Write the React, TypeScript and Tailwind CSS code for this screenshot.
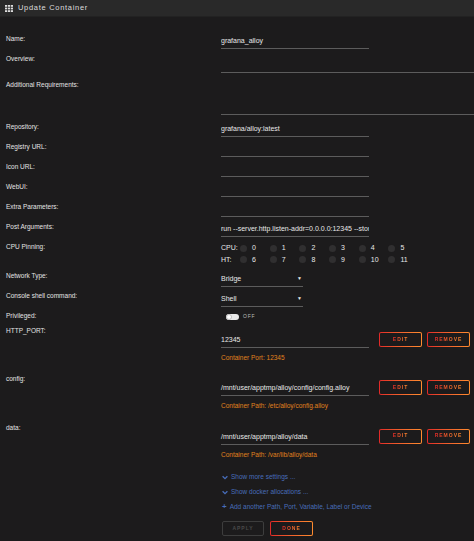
const font = { fontFamily: '"Liberation Sans", Arial, sans-serif' };

function Label({ children }: { children: React.ReactNode }) {
  return <div className="w-[215px] shrink-0 pt-[2px] text-[6.5px] leading-[8px] text-[#e4e4e4]">{children}</div>;
}

function Field({ value = '', wide = false, w = 'w-[148px]' }: { value?: string; wide?: boolean; w?: string }) {
  return (
    <div
      className={`${wide ? 'flex-1' : w} h-[16px] pt-[3px] pb-[3px] border-b border-[#5c5c5c] text-[7px] leading-[9px] text-[#e8e8e8] whitespace-nowrap overflow-hidden`}
    >
      {value}
    </div>
  );
}

function Row({ label, children, h = 'h-[20px]' }: { label: string; children?: React.ReactNode; h?: string }) {
  return (
    <div className={`flex ${h}`}>
      <Label>{label}</Label>
      <div className="flex-1 flex items-start">{children}</div>
    </div>
  );
}

function GradButton({ children, w = 'w-[43px]' }: { children: React.ReactNode; w?: string }) {
  return (
    <div className={`${w} h-[15px] p-[1px] rounded-[2px] bg-gradient-to-r from-[#e22828] to-[#ff8c2f]`}>
      <div className="w-full h-full rounded-[1px] bg-[#1c1b1c] flex items-center justify-center">
        <span className="text-[5px] font-bold tracking-[1px] bg-gradient-to-r from-[#e22828] to-[#ff8c2f] bg-clip-text text-transparent">
          {children}
        </span>
      </div>
    </div>
  );
}

function Select({ value }: { value: string }) {
  return (
    <div className="w-[82px] h-[16px] pt-[3px] pb-[3px] border-b border-[#5c5c5c] flex justify-between items-center text-[7px] leading-[9px] text-[#e8e8e8]">
      <span>{value}</span>
      <span className="text-[5px] pr-[1px]">▼</span>
    </div>
  );
}

function PathRow({ label, value, sub }: { label: string; value: string; sub: string }) {
  return (
    <div className="flex h-[48.3px]">
      <Label>{label}</Label>
      <div className="flex-1 flex flex-col">
        <div className="flex items-start">
          <div className="pt-[7px]">
            <div className="w-[148px] h-[16px] pt-[3px] pb-[3px] border-b border-[#5c5c5c] text-[7px] leading-[9px] text-[#e8e8e8] whitespace-nowrap">
              {value}
            </div>
          </div>
          <div className="flex gap-[5px] ml-[10px] pt-[7px]">
            <GradButton>EDIT</GradButton>
            <GradButton>REMOVE</GradButton>
          </div>
        </div>
        <div className="pt-[5px] text-[6.5px] leading-[9px] text-[#e0821e]">{sub}</div>
      </div>
    </div>
  );
}

function Chevron() {
  return (
    <svg width="6" height="5" viewBox="0 0 6 5" className="mr-[3px]">
      <path d="M0.6 1.2 L3 3.6 L5.4 1.2" stroke="#486dba" strokeWidth="1.3" fill="none" />
    </svg>
  );
}

export default function App() {
  const cpu = ['0', '1', '2', '3', '4', '5'];
  const ht = ['6', '7', '8', '9', '10', '11'];
  return (
    <div className="w-[474px] h-[541px] bg-[#1c1b1c] overflow-hidden" style={font}>
      {/* Header */}
      <div className="h-[17px] bg-[#292929] border-b border-[#222] flex items-center pl-[5px]">
        <svg width="8" height="7" viewBox="0 0 8 7" className="mr-[5px]">
          <rect x="0" y="0" width="2.2" height="1.8" fill="#ddd" />
          <rect x="2.9" y="0" width="2.2" height="1.8" fill="#ddd" />
          <rect x="5.8" y="0" width="2.2" height="1.8" fill="#ddd" />
          <rect x="0" y="2.6" width="2.2" height="1.8" fill="#ddd" />
          <rect x="2.9" y="2.6" width="2.2" height="1.8" fill="#ddd" />
          <rect x="5.8" y="2.6" width="2.2" height="1.8" fill="#ddd" />
          <rect x="0" y="5.2" width="2.2" height="1.8" fill="#ddd" />
          <rect x="2.9" y="5.2" width="2.2" height="1.8" fill="#ddd" />
          <rect x="5.8" y="5.2" width="2.2" height="1.8" fill="#ddd" />
        </svg>
        <span className="text-[7.5px] tracking-[0.7px] text-[#dcdcdc]">Update Container</span>
      </div>

      <div className="pl-[6px] pt-[16px]">
        <Row label="Name:">
          <Field value="grafana_alloy" />
        </Row>
        <Row label="Overview:" h="h-[26px]">
          <div className="flex-1 h-[20px] border-b border-[#5c5c5c]" />
        </Row>
        <Row label="Additional Requirements:" h="h-[42px]">
          <div className="flex-1 h-[36px] border-b border-[#5c5c5c]" />
        </Row>
        <Row label="Repository:">
          <Field value="grafana/alloy:latest" />
        </Row>
        <Row label="Registry URL:">
          <Field />
        </Row>
        <Row label="Icon URL:">
          <Field />
        </Row>
        <Row label="WebUI:">
          <Field />
        </Row>
        <Row label="Extra Parameters:">
          <Field />
        </Row>
        <Row label="Post Arguments:">
          <Field value="run --server.http.listen-addr=0.0.0.0:12345  --stor" />
        </Row>

        {/* CPU pinning */}
        <div className="flex h-[29px]">
          <Label>CPU Pinning:</Label>
          <div className="flex flex-col pt-[3px] gap-[3.5px] text-[7px] leading-[8px] text-[#e8e8e8]">
            {[
              ['CPU:', cpu],
              ['HT:', ht],
            ].map(([name, list]) => (
              <div key={name as string} className="flex items-center">
                <span className="w-[19px]">{name as string}</span>
                {(list as string[]).map((n) => (
                  <div key={n} className="w-[29.7px] flex items-center">
                    <span className="w-[7px] h-[7px] rounded-full bg-[#302f30] mr-[5px]" />
                    <span>{n}</span>
                  </div>
                ))}
              </div>
            ))}
          </div>
        </div>

        <Row label="Network Type:">
          <div className="pt-[1px]">
            <Select value="Bridge" />
          </div>
        </Row>
        <Row label="Console shell command:">
          <div className="pt-[1px]">
            <Select value="Shell" />
          </div>
        </Row>
        <Row label="Privileged:" h="h-[15px]">
          <div className="flex items-center ml-[5px] pt-[3px]">
            <div className="w-[13px] h-[6px] rounded-full bg-[#e8e8e8] flex items-center">
              <div className="w-[6px] h-[6px] rounded-full bg-white border border-[#bdbdbd]" />
            </div>
            <span className="ml-[4px] text-[5px] tracking-[0.8px] text-[#bbb]">OFF</span>
          </div>
        </Row>

        <PathRow label="HTTP_PORT:" value="12345" sub="Container Port: 12345" />
        <PathRow label="config:" value="/mnt/user/apptmp/alloy/config/config.alloy" sub="Container Path: /etc/alloy/config.alloy" />
        <PathRow label="data:" value="/mnt/user/apptmp/alloy/data" sub="Container Path: /var/lib/alloy/data" />

        <div className="pl-[216px] flex flex-col text-[6.5px] leading-[8px] text-[#486dba]">
          <div className="flex items-center h-[15px]">
            <Chevron />
            Show more settings ...
          </div>
          <div className="flex items-center h-[15px]">
            <Chevron />
            Show docker allocations ...
          </div>
          <div className="flex items-center h-[15px]">
            <span className="mr-[3px] text-[8px] font-bold leading-[8px]">+</span>
            Add another Path, Port, Variable, Label or Device
          </div>
          <div className="flex gap-[6px] mt-[6px]">
            <div className="w-[42px] h-[15px] border border-[#3d3d3d] rounded-[2px] flex items-center justify-center text-[5px] tracking-[1px] font-bold text-[#4a4a4a]">
              APPLY
            </div>
            <GradButton>DONE</GradButton>
          </div>
        </div>
      </div>
    </div>
  );
}
